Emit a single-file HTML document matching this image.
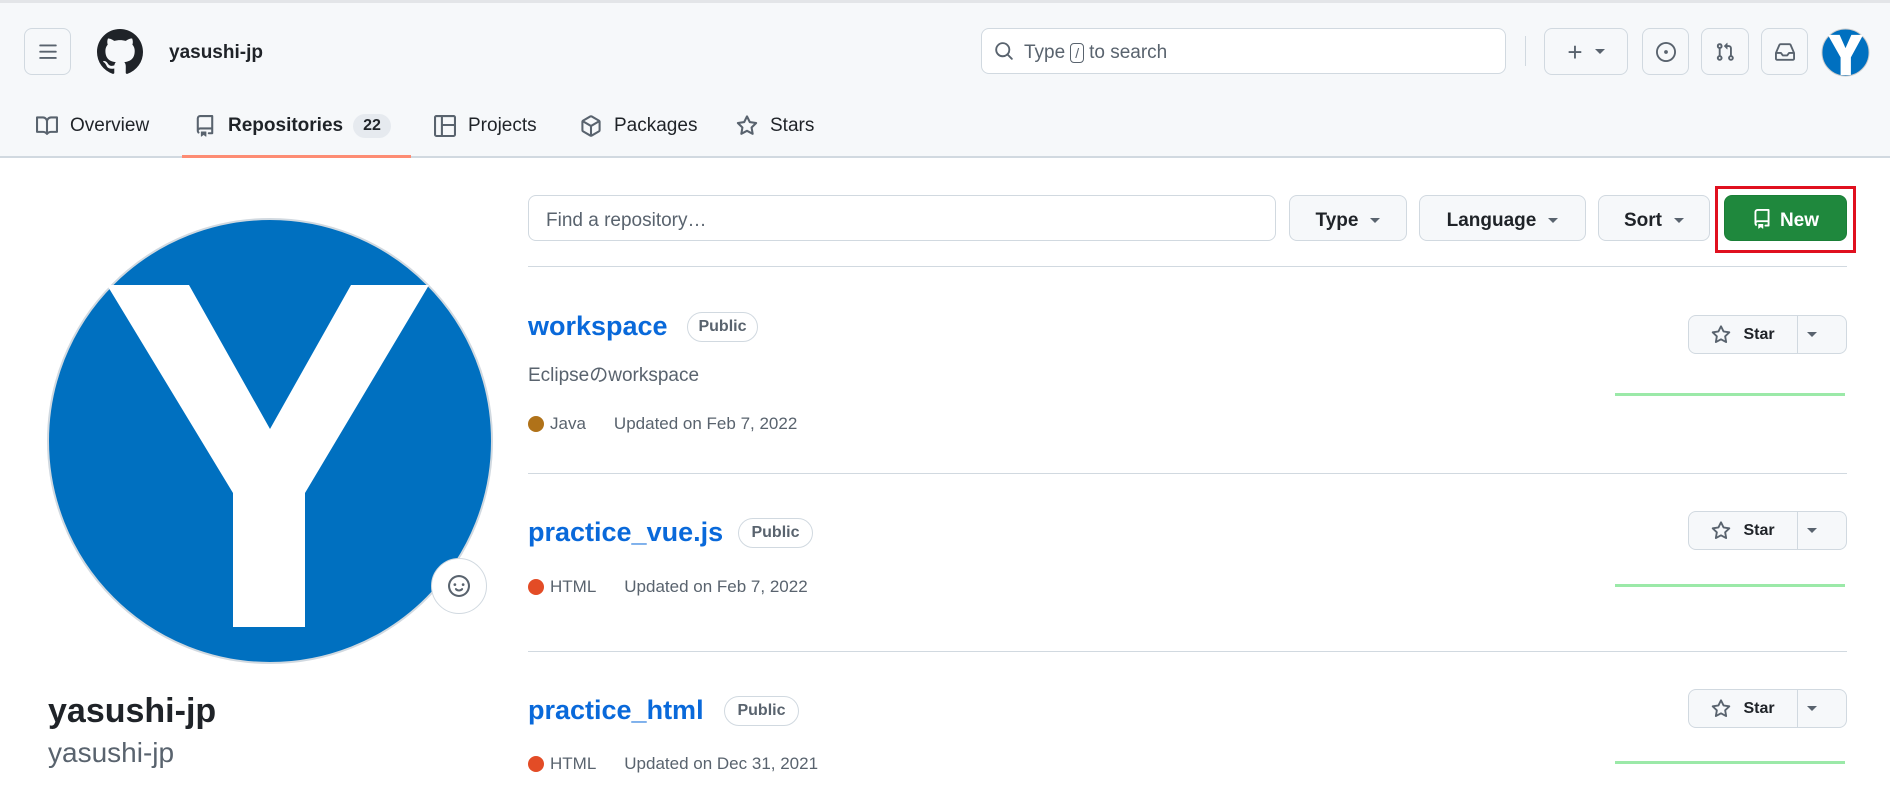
<!DOCTYPE html>
<html><head><meta charset="utf-8"><style>
*{box-sizing:border-box;margin:0;padding:0}
body{width:1890px;height:791px;overflow:hidden;background:#fff;font-family:"Liberation Sans","Noto Sans CJK JP",sans-serif;color:#1f2328;position:relative}
.a{position:absolute}
.hdr{left:0;top:0;width:1890px;height:158px;background:#f6f8fa;border-top:3px solid #e3e5e8;border-bottom:2px solid #d1d9e0}
.btn{position:absolute;border:1px solid #d1d9e0;border-radius:8px;background:#f6f8fa;display:flex;align-items:center;justify-content:center}
.tab{position:absolute;top:112px;font-size:19px;color:#1f2328;display:flex;align-items:center;height:28px}
.tab svg{margin-right:12px}
.fbtn{position:absolute;top:195px;height:46px;border:1px solid #d1d9e0;border-radius:8px;background:#f6f8fa;font-size:19px;font-weight:bold;display:flex;align-items:center;justify-content:center;padding-top:5px}
.caret{display:inline-block;width:0;height:0;border-left:5px solid transparent;border-right:5px solid transparent;border-top:5px solid #59636e;margin-left:12px}
.title{position:absolute;left:528px;font-size:27px;font-weight:bold;color:#0969da}
.pub{position:absolute;height:30px;border:1px solid #d1d9e0;border-radius:15px;font-size:16px;font-weight:bold;color:#59636e;display:flex;align-items:center;justify-content:center}
.meta{position:absolute;left:528px;font-size:17px;color:#59636e;display:flex;align-items:center}
.dot{width:16px;height:16px;border-radius:50%;display:inline-block;margin-right:6px}
.star{position:absolute;left:1688px;width:159px;height:39px;border:1px solid #d1d9e0;border-radius:8px;background:#f6f8fa}
.star .s{position:absolute;left:0;top:0;width:109px;height:37px;border-right:1px solid #d1d9e0;display:flex;align-items:center;justify-content:center;font-size:16px;font-weight:bold}
.star .c{position:absolute;left:118px;top:16px;width:0;height:0;border-left:5px solid transparent;border-right:5px solid transparent;border-top:5px solid #59636e}
.gl{position:absolute;left:1615px;width:230px;height:3px;background:#9be9a8}
.sep{position:absolute;left:528px;width:1319px;height:1px;background:#d1d9e0}
</style></head><body>
<div class="a hdr"></div>
<div class="btn" style="left:24px;top:28px;width:47px;height:47px"><svg width="20" height="20" viewBox="0 0 16 16" fill="#59636e"><path d="M1 2.75A.75.75 0 0 1 1.75 2h12.5a.75.75 0 0 1 0 1.5H1.75A.75.75 0 0 1 1 2.75Zm0 5A.75.75 0 0 1 1.75 7h12.5a.75.75 0 0 1 0 1.5H1.75A.75.75 0 0 1 1 7.75ZM1.75 12h12.5a.75.75 0 0 1 0 1.5H1.75a.75.75 0 0 1 0-1.5Z"/></svg></div>
<svg class="a" style="left:97px;top:29px" width="46" height="46" viewBox="0 0 16 16" fill="#1f2328"><path d="M8 0c4.42 0 8 3.58 8 8a8.013 8.013 0 0 1-5.45 7.59c-.4.08-.55-.17-.55-.38 0-.27.01-1.130.01-2.2 0-.75-.25-1.23-.54-1.48 1.78-.2 3.650-.88 3.650-3.95 0-.88-.31-1.59-.82-2.15.08-.2.36-1.02-.08-2.12 0 0-.67-.22-2.2.82-.64-.18-1.32-.27-2-.27-.68 0-1.36.09-2 .27-1.53-1.03-2.2-.82-2.2-.82-.44 1.1-.16 1.92-.08 2.12-.51.56-.82 1.28-.82 2.150 0 3.060 1.86 3.75 3.64 3.95-.23.2-.44.55-.51 1.07-.46.21-1.61.55-2.33-.66-.15-.24-.6-.83-1.23-.82-.67.01-.27.38.01.53.34.19.73.9.82 1.13.16.45.68 1.31 2.69.94 0 .67.01 1.3.01 1.49 0 .21-.15.45-.55.38A7.995 7.995 0 0 1 0 8c0-4.42 3.58-8 8-8Z"/></svg>
<div class="a" style="left:169px;top:42px;font-size:19px;font-weight:bold">yasushi-jp</div>
<div class="a" style="left:981px;top:28px;width:525px;height:46px;border:1px solid #d1d9e0;border-radius:8px;background:#fff;display:flex;align-items:center;padding-left:12px;padding-top:4px;font-size:19px;color:#59636e">
<svg width="20" height="20" viewBox="0 0 16 16" fill="#59636e" style="margin-right:10px;margin-top:-4px"><path d="M10.68 11.74a6 6 0 0 1-7.922-8.982 6 6 0 0 1 8.982 7.922l3.04 3.04a.749.749 0 1 1-1.060 1.060ZM11.5 7a4.499 4.499 0 1 0-8.997 0A4.499 4.499 0 0 0 11.5 7Z"/></svg>Type <span style="display:inline-block;border:1px solid #59636e;border-radius:4px;font-size:14px;padding:1px 4px;margin:0 5px">/</span> to search</div>
<div class="a" style="left:1525px;top:36px;width:1px;height:30px;background:#d1d9e0"></div>
<div class="btn" style="left:1544px;top:28px;width:84px;height:47px"><span style="font-size:26px;color:#59636e;line-height:1">+</span><span class="caret"></span></div>
<div class="btn" style="left:1642px;top:28px;width:47px;height:47px"><svg width="20" height="20" viewBox="0 0 16 16" fill="#59636e"><path d="M8 9.5a1.5 1.5 0 1 0 0-3 1.5 1.5 0 0 0 0 3Z"/><path d="M8 0a8 8 0 1 1 0 16A8 8 0 0 1 8 0ZM1.5 8a6.5 6.5 0 1 0 13 0 6.5 6.5 0 0 0-13 0Z"/></svg></div>
<div class="btn" style="left:1701px;top:28px;width:48px;height:47px"><svg width="20" height="20" viewBox="0 0 16 16" fill="#59636e"><path d="M1.5 3.25a2.25 2.25 0 1 1 3 2.122v5.256a2.251 2.251 0 1 1-1.5 0V5.372A2.25 2.25 0 0 1 1.5 3.25Zm5.677-.177L9.573.677A.25.25 0 0 1 10 .854V2.5h1A2.5 2.5 0 0 1 13.5 5v5.628a2.251 2.251 0 1 1-1.5 0V5a1 1 0 0 0-1-1h-1v1.646a.25.25 0 0 1-.427.177L7.177 3.427a.25.25 0 0 1 0-.354ZM3.75 2.5a.75.75 0 1 0 0 1.5.75.75 0 0 0 0-1.5Zm0 9.5a.75.75 0 1 0 0 1.5.75.75 0 0 0 0-1.5Zm8.250.75a.75.75 0 1 0 1.5 0 .75.75 0 0 0-1.5 0Z"/></svg></div>
<div class="btn" style="left:1761px;top:28px;width:47px;height:47px"><svg width="20" height="20" viewBox="0 0 16 16" fill="#59636e"><path d="M2.8 2.06A1.75 1.75 0 0 1 4.41 1h7.18c.7 0 1.333.417 1.61 1.06l2.74 6.395c.04.093.06.194.06.295v4.5A1.75 1.75 0 0 1 14.25 15H1.75A1.75 1.75 0 0 1 0 13.25v-4.5c0-.101.02-.202.06-.295Zm1.61.44a.25.25 0 0 0-.23.152L1.887 8H4.75a.75.75 0 0 1 .6.3L6.625 10h2.75l1.275-1.7a.75.75 0 0 1 .6-.3h2.863L11.82 2.652a.25.25 0 0 0-.23-.152Zm10.090 7h-2.875l-1.275 1.7a.75.75 0 0 1-.6.3h-3.5a.75.75 0 0 1-.6-.3L4.375 9.5H1.5v3.75c0 .138.112.25.25.25h12.5a.25.25 0 0 0 .25-.25Z"/></svg></div>
<svg class="a" style="left:1821px;top:28px" width="49" height="49" viewBox="0 0 100 100"><circle cx="50" cy="50" r="48" fill="#0070c0" stroke="#ccc" stroke-width="2"/><path d="M14 14H38L50 41L62 14H86L61 60V96H40V60Z" fill="#fff"/></svg>

<div class="tab" style="left:36px"><svg width="22" height="22" viewBox="0 0 16 16" fill="#59636e"><path d="M0 1.75A.75.75 0 0 1 .75 1h4.253c1.227 0 2.317.59 3 1.501A3.743 3.743 0 0 1 11.006 1h4.245a.75.75 0 0 1 .75.75v10.5a.75.75 0 0 1-.75.75h-4.507a2.25 2.25 0 0 0-1.591.659l-.622.621a.75.75 0 0 1-1.060 0l-.622-.621A2.25 2.25 0 0 0 5.258 13H.75a.75.75 0 0 1-.75-.75Zm7.251 10.324.004-5.073-.002-2.253A2.25 2.25 0 0 0 5.003 2.5H1.5v9h3.757a3.75 3.75 0 0 1 1.994.574ZM8.755 4.75l-.004 7.322a3.752 3.752 0 0 1 1.992-.572H14.5v-9h-3.495a2.25 2.25 0 0 0-2.25 2.25Z"/></svg>Overview</div>
<div class="tab" style="left:194px;font-weight:bold"><svg width="22" height="22" viewBox="0 0 16 16" fill="#59636e"><path d="M2 2.5A2.5 2.5 0 0 1 4.5 0h8.75a.75.75 0 0 1 .75.75v12.5a.75.75 0 0 1-.75.75h-2.5a.75.75 0 0 1 0-1.5h1.75v-2h-8a1 1 0 0 0-.714 1.7.75.75 0 1 1-1.072 1.05A2.495 2.495 0 0 1 2 11.5Zm10.5-1h-8a1 1 0 0 0-1 1v6.708A2.486 2.486 0 0 1 4.5 9h8ZM5 12.25a.25.25 0 0 1 .25-.25h3.5a.25.25 0 0 1 .25.25v3.25a.25.25 0 0 1-.4.2l-1.45-1.087a.249.249 0 0 0-.3 0L5.4 15.7a.25.25 0 0 1-.4-.2Z"/></svg>Repositories<span style="margin-left:10px;background:#e6eaef;border-radius:14px;padding:3px 10px;font-size:16px">22</span></div>
<div class="a" style="left:182px;top:155px;width:229px;height:3px;background:#fd8c73"></div>
<div class="tab" style="left:434px"><svg width="22" height="22" viewBox="0 0 16 16" fill="#59636e"><path d="M1.75 0h12.5C15.216 0 16 .784 16 1.75v12.5A1.75 1.75 0 0 1 14.25 16H1.75A1.75 1.75 0 0 1 0 14.25V1.75C0 .784.784 0 1.75 0ZM1.5 1.75v12.5c0 .138.112.25.25.25H5v-13H1.75a.25.25 0 0 0-.25.25ZM6.5 14.5h7.75a.25.25 0 0 0 .25-.25V8H6.5Zm8-8V1.75a.25.25 0 0 0-.25-.25H6.5v5Z"/></svg>Projects</div>
<div class="tab" style="left:580px"><svg width="22" height="22" viewBox="0 0 16 16" fill="#59636e"><path d="m8.878.392 5.25 3.045c.54.314.872.89.872 1.514v6.098a1.75 1.75 0 0 1-.872 1.514l-5.25 3.045a1.75 1.75 0 0 1-1.756 0l-5.25-3.045A1.75 1.75 0 0 1 1 11.049V4.951c0-.624.332-1.201.872-1.514L7.122.392a1.75 1.75 0 0 1 1.756 0ZM7.875 1.69l-4.63 2.685L8 7.133l4.755-2.758-4.63-2.685a.248.248 0 0 0-.25 0ZM2.5 5.677v5.372c0 .09.047.171.125.216l4.625 2.683V8.432Zm6.25 8.271 4.625-2.683a.25.25 0 0 0 .125-.216V5.677L8.75 8.432Z"/></svg>Packages</div>
<div class="tab" style="left:736px"><svg width="22" height="22" viewBox="0 0 16 16" fill="#59636e"><path d="M8 .25a.75.75 0 0 1 .673.418l1.882 3.815 4.21.612a.75.75 0 0 1 .416 1.279l-3.046 2.97.719 4.192a.751.751 0 0 1-1.088.791L8 12.347l-3.766 1.98a.75.75 0 0 1-1.088-.79l.72-4.194L.818 6.374a.75.75 0 0 1 .416-1.28l4.21-.611L7.327.668A.75.75 0 0 1 8 .25Zm0 2.445L6.615 5.5a.75.75 0 0 1-.564.41l-3.097.45 2.24 2.184a.75.75 0 0 1 .216.664l-.528 3.084 2.769-1.456a.75.75 0 0 1 .698 0l2.77 1.456-.53-3.084a.75.75 0 0 1 .216-.664l2.24-2.183-3.096-.45a.75.75 0 0 1-.564-.41L8 2.694Z"/></svg>Stars</div>

<svg class="a" style="left:47px;top:217px" width="446" height="448" viewBox="0 0 446 448"><circle cx="223" cy="224" r="222" fill="#0070c0" stroke="#d1d9e0" stroke-width="2"/><path d="M60 68H142L223 212L304 68H382L258 276V410H186V276Z" fill="#fff"/></svg>
<div class="a" style="left:431px;top:558px;width:56px;height:56px;border-radius:50%;background:#fff;border:1px solid #d1d9e0;display:flex;align-items:center;justify-content:center"><svg width="22" height="22" viewBox="0 0 16 16" fill="#59636e"><path d="M8 0a8 8 0 1 1 0 16A8 8 0 0 1 8 0ZM1.5 8a6.5 6.5 0 1 0 13 0 6.5 6.5 0 0 0-13 0Zm3.82 1.636a.75.75 0 0 1 1.038.175l.007.009c.103.118.22.222.35.31.264.178.683.37 1.285.37.602 0 1.02-.192 1.285-.371.13-.088.247-.192.35-.31l.007-.008a.75.75 0 0 1 1.222.87l-.022-.015c.02.013.021.015.021.015v.001l-.001.002-.002.003-.005.007-.014.019a2.066 2.066 0 0 1-.184.213c-.16.166-.338.316-.53.445-.63.418-1.37.638-2.127.629-.946 0-1.652-.308-2.126-.63a3.331 3.331 0 0 1-.715-.657l-.014-.02-.005-.006-.002-.003v-.002h-.001l.613-.432-.614.43a.75.75 0 0 1 .183-1.044ZM12 7a1 1 0 1 1-2 0 1 1 0 0 1 2 0ZM5 8a1 1 0 1 1 0-2 1 1 0 0 1 0 2Z"/></svg></div>
<div class="a" style="left:48px;top:692px;font-size:34px;font-weight:bold">yasushi-jp</div>
<div class="a" style="left:48px;top:737px;font-size:28px;color:#59636e">yasushi-jp</div>

<div class="a" style="left:528px;top:195px;width:748px;height:46px;border:1px solid #d1d9e0;border-radius:8px;display:flex;align-items:center;padding-left:17px;padding-top:5px;font-size:19px;color:#59636e">Find a repository…</div>
<div class="fbtn" style="left:1289px;width:118px">Type<span class="caret"></span></div>
<div class="fbtn" style="left:1419px;width:167px">Language<span class="caret"></span></div>
<div class="fbtn" style="left:1598px;width:112px">Sort<span class="caret"></span></div>
<div class="a" style="left:1715px;top:186px;width:141px;height:67px;border:3px solid #e0101f"></div>
<div class="fbtn" style="left:1724px;width:123px;background:#1f883d;border-color:#1a7f37;color:#fff"><svg width="20" height="20" viewBox="0 0 16 16" fill="#fff" style="margin-right:8px;margin-top:-4px"><path d="M2 2.5A2.5 2.5 0 0 1 4.5 0h8.75a.75.75 0 0 1 .75.75v12.5a.75.75 0 0 1-.75.75h-2.5a.75.75 0 0 1 0-1.5h1.75v-2h-8a1 1 0 0 0-.714 1.7.75.75 0 1 1-1.072 1.05A2.495 2.495 0 0 1 2 11.5Zm10.5-1h-8a1 1 0 0 0-1 1v6.708A2.486 2.486 0 0 1 4.5 9h8ZM5 12.25a.25.25 0 0 1 .25-.25h3.5a.25.25 0 0 1 .25.25v3.25a.25.25 0 0 1-.4.2l-1.45-1.087a.249.249 0 0 0-.3 0L5.4 15.7a.25.25 0 0 1-.4-.2Z"/></svg>New</div>
<div class="sep" style="top:266px"></div>

<div class="title" style="top:311px">workspace</div>
<div class="pub" style="left:687px;top:312px;width:71px">Public</div>
<div class="a" style="left:528px;top:360px;font-size:19px;color:#59636e">Eclipseのworkspace</div>
<div class="meta" style="top:414px"><span class="dot" style="background:#b07219"></span>Java<span style="margin-left:28px">Updated on Feb 7, 2022</span></div>
<div class="star" style="top:315px"><div class="s"><svg width="20" height="20" viewBox="0 0 16 16" fill="#59636e" style="margin-right:12px"><path d="M8 .25a.75.75 0 0 1 .673.418l1.882 3.815 4.21.612a.75.75 0 0 1 .416 1.279l-3.046 2.97.719 4.192a.751.751 0 0 1-1.088.791L8 12.347l-3.766 1.98a.75.75 0 0 1-1.088-.79l.72-4.194L.818 6.374a.75.75 0 0 1 .416-1.28l4.21-.611L7.327.668A.75.75 0 0 1 8 .25Zm0 2.445L6.615 5.5a.75.75 0 0 1-.564.41l-3.097.45 2.24 2.184a.75.75 0 0 1 .216.664l-.528 3.084 2.769-1.456a.75.75 0 0 1 .698 0l2.77 1.456-.53-3.084a.75.75 0 0 1 .216-.664l2.24-2.183-3.096-.45a.75.75 0 0 1-.564-.41L8 2.694Z"/></svg>Star</div><div class="c"></div></div>
<div class="gl" style="top:393px"></div>
<div class="sep" style="top:473px"></div>

<div class="title" style="top:517px">practice_vue.js</div>
<div class="pub" style="left:738px;top:518px;width:75px">Public</div>
<div class="meta" style="top:577px"><span class="dot" style="background:#e34c26"></span>HTML<span style="margin-left:28px">Updated on Feb 7, 2022</span></div>
<div class="star" style="top:511px"><div class="s"><svg width="20" height="20" viewBox="0 0 16 16" fill="#59636e" style="margin-right:12px"><path d="M8 .25a.75.75 0 0 1 .673.418l1.882 3.815 4.21.612a.75.75 0 0 1 .416 1.279l-3.046 2.97.719 4.192a.751.751 0 0 1-1.088.791L8 12.347l-3.766 1.98a.75.75 0 0 1-1.088-.79l.72-4.194L.818 6.374a.75.75 0 0 1 .416-1.28l4.21-.611L7.327.668A.75.75 0 0 1 8 .25Zm0 2.445L6.615 5.5a.75.75 0 0 1-.564.41l-3.097.45 2.24 2.184a.75.75 0 0 1 .216.664l-.528 3.084 2.769-1.456a.75.75 0 0 1 .698 0l2.77 1.456-.53-3.084a.75.75 0 0 1 .216-.664l2.24-2.183-3.096-.45a.75.75 0 0 1-.564-.41L8 2.694Z"/></svg>Star</div><div class="c"></div></div>
<div class="gl" style="top:584px"></div>
<div class="sep" style="top:651px"></div>

<div class="title" style="top:695px">practice_html</div>
<div class="pub" style="left:724px;top:696px;width:75px">Public</div>
<div class="meta" style="top:754px"><span class="dot" style="background:#e34c26"></span>HTML<span style="margin-left:28px">Updated on Dec 31, 2021</span></div>
<div class="star" style="top:689px"><div class="s"><svg width="20" height="20" viewBox="0 0 16 16" fill="#59636e" style="margin-right:12px"><path d="M8 .25a.75.75 0 0 1 .673.418l1.882 3.815 4.21.612a.75.75 0 0 1 .416 1.279l-3.046 2.97.719 4.192a.751.751 0 0 1-1.088.791L8 12.347l-3.766 1.98a.75.75 0 0 1-1.088-.79l.72-4.194L.818 6.374a.75.75 0 0 1 .416-1.28l4.21-.611L7.327.668A.75.75 0 0 1 8 .25Zm0 2.445L6.615 5.5a.75.75 0 0 1-.564.41l-3.097.45 2.24 2.184a.75.75 0 0 1 .216.664l-.528 3.084 2.769-1.456a.75.75 0 0 1 .698 0l2.77 1.456-.53-3.084a.75.75 0 0 1 .216-.664l2.24-2.183-3.096-.45a.75.75 0 0 1-.564-.41L8 2.694Z"/></svg>Star</div><div class="c"></div></div>
<div class="gl" style="top:761px"></div>
</body></html>
